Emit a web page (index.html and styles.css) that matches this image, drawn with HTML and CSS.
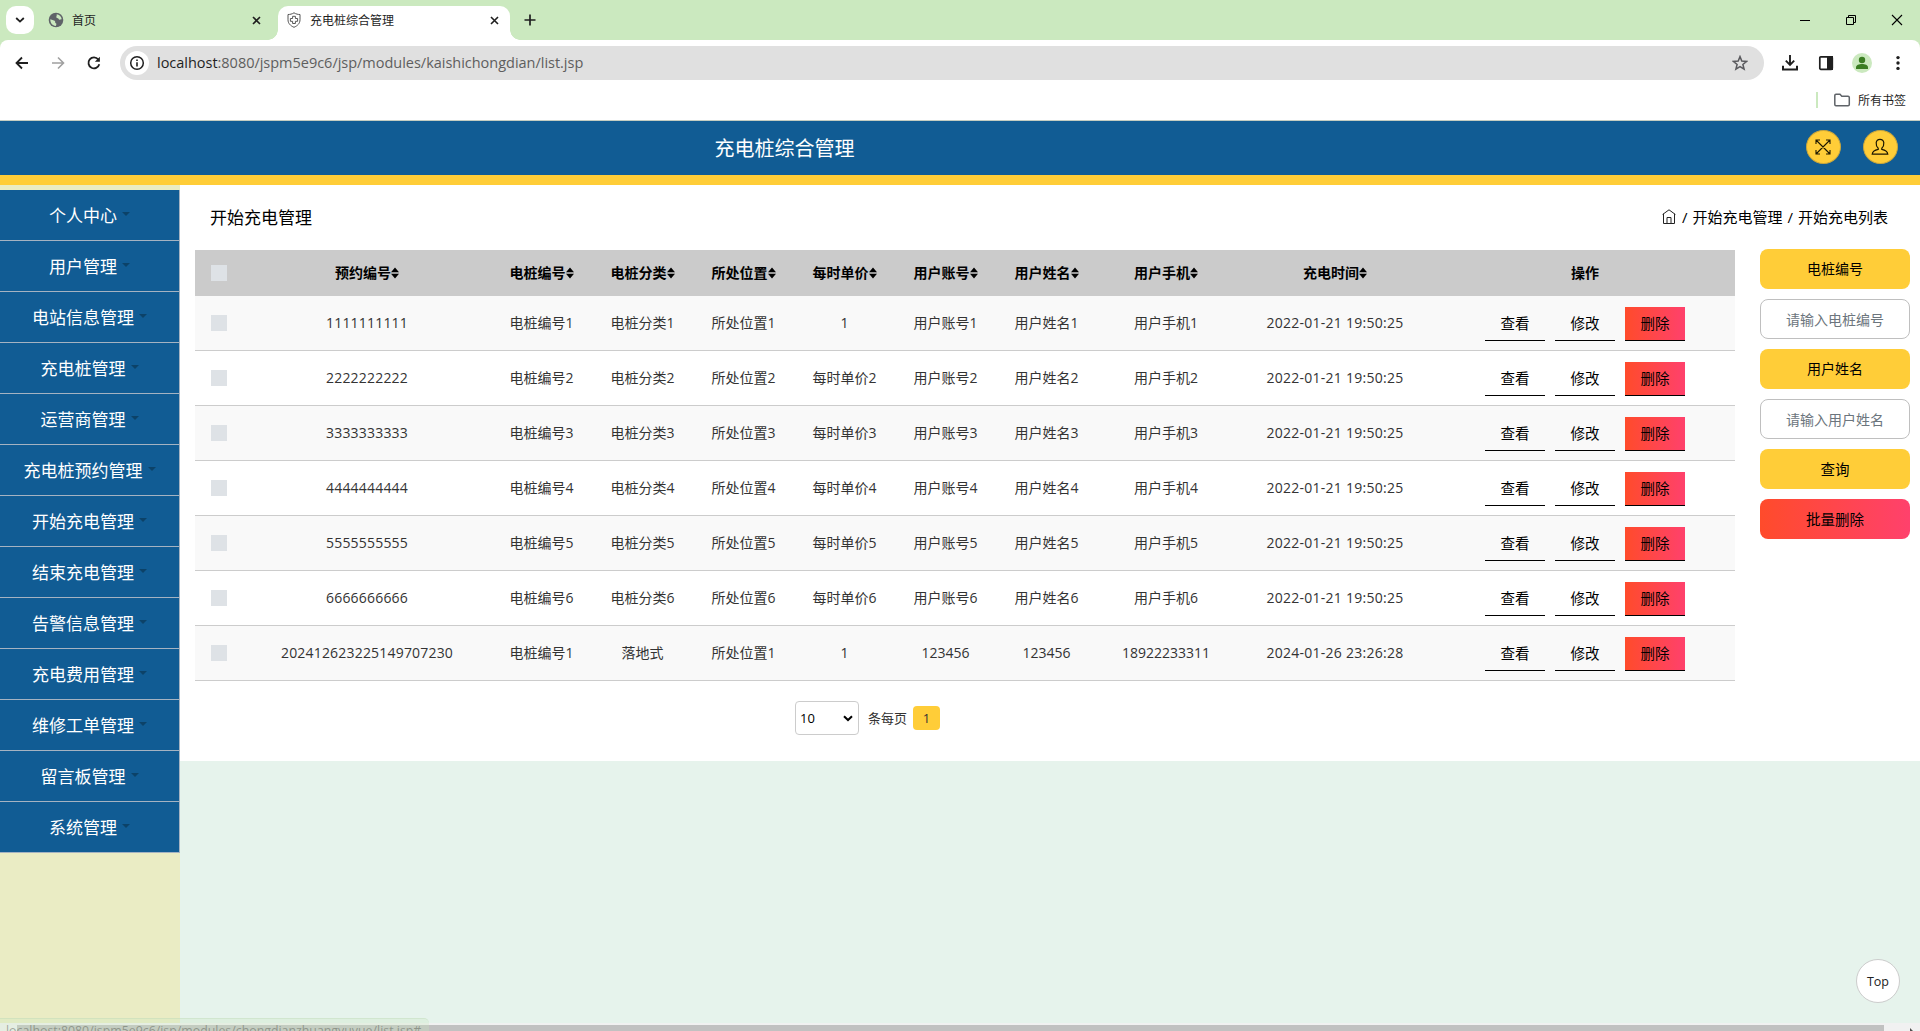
FILE: index.html
```
<!DOCTYPE html>
<html lang="zh">
<head>
<meta charset="utf-8">
<title>充电桩综合管理</title>
<link rel="stylesheet" href="styles.css">
</head>
<body>
<div class="browser">
  <div class="tabstrip">
    <div class="tabsearch"><svg width="10" height="8" viewBox="0 0 10 8"><path d="M1.200 2 5 5.600 8.800 2" fill="none" stroke="#1f1f1f" stroke-width="1.800"/></svg></div>
    <div class="tab">
      <svg width="16" height="16" viewBox="0 0 16 16"><circle cx="8" cy="8" r="7.300" fill="#5f6368"/><path d="M8.600 2.300c2.600.2 4.800 2.300 5.100 5-.9-.3-1.500.6-2.300.5-.8-.2-.6-1.500-1.600-1.600-1-.1-1.700-.8-1.400-1.700.2-.8.6-1.300.2-2.200zM2.300 7.200l3.700 1.300c.9.400 1.300 1 1.200 1.900 0 .9 1.200.6 1.200 1.700 0 .8-.4 1.200-.6 1.800C4.600 13.600 2.100 11 2.300 7.200z" fill="#cbe9bf"/></svg>
      <span class="tabname">首页</span>
      <svg class="x" width="9" height="9" viewBox="0 0 9 9"><path d="M1 1l7 7M8 1l-7 7" stroke="#1f1f1f" stroke-width="1.600"/></svg>
    </div>
    <div class="tab active">
      <svg width="16" height="16" viewBox="0 0 16 16"><path d="M8 .8c2 1.300 4 1.700 6 1.700v5.300c0 3.600-2.500 6-6 7.500-3.500-1.500-6-3.900-6-7.500V2.500c2 0 4-.4 6-1.700z" fill="none" stroke="#555" stroke-width="1"/><path d="M6.600 4.300h2.800v2.200h2.200v2.800H9.400v2.200H6.600V9.300H4.400V6.500h2.200z" fill="none" stroke="#555" stroke-width="1"/></svg>
      <span class="tabname">充电桩综合管理</span>
      <svg class="x" width="9" height="9" viewBox="0 0 9 9"><path d="M1 1l7 7M8 1l-7 7" stroke="#1f1f1f" stroke-width="1.600"/></svg>
    </div>
    <svg class="plus" width="12" height="12" viewBox="0 0 12 12"><path d="M6 .5v11M.5 6h11" stroke="#1f1f1f" stroke-width="1.700"/></svg>
    <div class="winctl">
      <svg width="12" height="12" viewBox="0 0 12 12"><path d="M1 6.500h10" stroke="#000"/></svg>
      <svg width="12" height="12" viewBox="0 0 12 12"><path d="M1.500 3.500h7v7h-7zM3.500 3.500v-2h7v7h-2" fill="none" stroke="#000"/></svg>
      <svg width="12" height="12" viewBox="0 0 12 12"><path d="M1 1l10 10M11 1L1 11" stroke="#000" stroke-width="1.100"/></svg>
    </div>
  </div>
  <div class="toolbar">
    <svg width="16" height="16" viewBox="0 0 16 16"><path d="M14 8H2.800M8 2.500L2.500 8 8 13.500" fill="none" stroke="#1f1f1f" stroke-width="1.800"/></svg>
    <svg width="16" height="16" viewBox="0 0 16 16"><path d="M2 8h11.200M8 2.500L13.500 8 8 13.500" fill="none" stroke="#a0a0a0" stroke-width="1.600"/></svg>
    <svg width="16" height="16" viewBox="0 0 16 16"><path d="M13.300 9.300A5.500 5.500 0 1 1 12.300 4.500" fill="none" stroke="#1f1f1f" stroke-width="1.800"/><path d="M13.900 1.700v5H8.900z" fill="#1f1f1f"/></svg>
    <div class="omnibox">
      <span class="info"><svg width="16" height="16" viewBox="0 0 16 16"><circle cx="8" cy="8" r="6.300" fill="none" stroke="#1f1f1f" stroke-width="1.500"/><path d="M8 7.200v4.200M8 4.500v1.600" stroke="#1f1f1f" stroke-width="1.600"/></svg></span>
      <span class="url"><b>localhost</b>:8080/jspm5e9c6/jsp/modules/kaishichongdian/list.jsp</span>
      <svg width="16" height="16" viewBox="0 0 16 16"><path d="M8 1.600l1.800 4.500 4.800.3-3.700 3.100 1.200 4.700L8 11.600l-4.100 2.600 1.200-4.700L1.400 6.400l4.800-.3z" fill="none" stroke="#5a5a5e" stroke-width="1.500"/></svg>
    </div>
    <div class="tools">
      <svg width="18" height="18" viewBox="0 0 18 18"><path d="M9 1v9.500M4.800 6.700L9 10.900l4.200-4.200" fill="none" stroke="#1f1f1f" stroke-width="1.900"/><path d="M2 11.800v3.700h14v-3.700" fill="none" stroke="#1f1f1f" stroke-width="2"/></svg>
      <svg width="18" height="18" viewBox="0 0 18 18"><rect x="2.800" y="2.800" width="12.500" height="12.500" rx="1" fill="none" stroke="#1f1f1f" stroke-width="1.700"/><path d="M10 2h6v14h-6z" fill="#1f1f1f"/></svg>
      <svg width="20" height="20" viewBox="0 0 20 20"><circle cx="10" cy="10" r="10" fill="#cbe9bf"/><circle cx="10" cy="7" r="3.200" fill="#3a7d22"/><path d="M4 16v-1.500c0-2.300 3-3.400 6-3.400s6 1.100 6 3.400V16z" fill="#3a7d22"/></svg>
      <svg width="16" height="16" viewBox="0 0 16 16"><g fill="#1f1f1f"><circle cx="8" cy="2.600" r="1.700"/><circle cx="8" cy="8" r="1.700"/><circle cx="8" cy="13.400" r="1.700"/></g></svg>
    </div>
  </div>
  <div class="bookmarks">
    <i></i>
    <svg width="18" height="14" viewBox="0 0 18 14"><path d="M1.800 11.500v-9c0-.8.400-1.200 1.200-1.200h4l1.800 1.900h6.300c.8 0 1.200.4 1.200 1.200v7.200c0 .8-.4 1.100-1.200 1.100H3c-.8 0-1.200-.4-1.200-1.200z" fill="none" stroke="#5f6368" stroke-width="1.500"/></svg>
    <span>所有书签</span>
  </div>
</div>
<header class="header">
  <h1>充电桩综合管理</h1>
  <div class="hbtns">
    <span class="round"><svg width="16" height="16" viewBox="0 0 16 16"><path d="M1 1l14 14M15 1L1 15M1 5V1h4M11 1h4v4M15 11v4h-4M5 15H1v-4" fill="none" stroke="#1c1600" stroke-width="1.100"/></svg></span>
    <span class="round"><svg width="18" height="18" viewBox="0 0 18 18"><path d="M7.200 10.200C5.600 8.800 5 6.800 5.200 4.600 5.500 2.500 7 1.300 9 1.300s3.500 1.200 3.800 3.300c.2 2.200-.4 4.200-2 5.600v1.200c3 .6 5.700 1.800 6 4.800H1.200c.3-3 3-4.200 6-4.800z" fill="none" stroke="#1c1600" stroke-width="1.200"/></svg></span>
  </div>
</header>
<div class="body">
  <nav class="sidebar" id="menu"></nav>
  <main class="main">
    <section class="panel">
      <div class="pagehead">
        <h2>开始充电管理</h2>
        <div class="crumbs"><svg width="14" height="15" viewBox="0 0 14 15"><path d="M.6 5.500L7 .8l6.400 4.700M1.500 4.800v9.700h11V4.800M5 14.500V8.500h4v6" fill="none" stroke="#222" stroke-width="1"/></svg><span>/</span><span>开始充电管理</span><span>/</span><span>开始充电列表</span></div>
      </div>
      <div class="content">
        <div class="list">
          <table>
            <colgroup><col class="c-check"><col class="c-id"><col class="c-n"><col class="c-n"><col class="c-n"><col class="c-n"><col class="c-n"><col class="c-n"><col class="c-phone"><col class="c-time"><col class="c-op"></colgroup>
            <thead id="thead"></thead>
            <tbody id="tbody"></tbody>
          </table>
          <div class="pager">
            <span class="select">10<svg width="10" height="7" viewBox="0 0 10 7"><path d="M1 1.200l4 3.800 4-3.800" fill="none" stroke="#000" stroke-width="2"/></svg></span>
            <span class="per">条每页</span>
            <span class="page">1</span>
          </div>
        </div>
        <aside class="filters">
          <div class="f yellow">电桩编号</div>
          <div class="f field">请输入电桩编号</div>
          <div class="f yellow">用户姓名</div>
          <div class="f field">请输入用户姓名</div>
          <div class="f yellow big">查询</div>
          <div class="f red big">批量删除</div>
        </aside>
      </div>
    </section>
  </main>
</div>
<div class="top">Top</div>
<div class="hscroll"><span class="left"></span><span class="thumb"></span><span class="right"></span></div>
<div class="status">localhost:8080/jspm5e9c6/jsp/modules/chongdianzhuangyuyue/list.jsp#</div>
<script src="app.js"></script>
</body>
</html>
```
FILE: styles.css
```
* { box-sizing: border-box; }
html, body { margin: 0; height: 1031px; overflow: hidden; }
body {
  display: flex; flex-direction: column; position: relative; width: 1920px;
  font-family: "Open Sans", "Noto Sans CJK SC", sans-serif;
  font-size: 14px; color: #333; background: #e6f3ec;
}
svg { display: block; flex: none; }
h1, h2 { margin: 0; font-weight: 400; }

.browser { height: 121px; flex: none; background: #fff; border-bottom: 1px solid #c5cdc2; color: #1f1f1f; font-size: 12px; }
.tabstrip { height: 48px; margin-bottom: -8px; padding: 6px 17px 8px 6px; display: flex; background: #cbe9bf; }
.tabsearch { width: 28px; height: 28px; border-radius: 10px; background: #fff; display: flex; align-items: center; justify-content: center; }
.tab { width: 232px; height: 34px; margin-left: 12px; padding: 0 17px 6px 2px; display: flex; align-items: center; gap: 8px; }
.tab .x { margin-left: auto; }
.tab.active { position: relative; margin-left: 0; padding: 0 11px 6px 8px; background: #fff; border-radius: 10px 10px 0 0; }
.tab.active::before, .tab.active::after { content: ""; position: absolute; bottom: 0; width: 10px; height: 10px; }
.tab.active::before { left: -10px; background: radial-gradient(circle at 0 0, #cbe9bf 9.500px, #fff 10px); }
.tab.active::after { right: -10px; background: radial-gradient(circle at 100% 0, #cbe9bf 9.500px, #fff 10px); }
.plus { margin: 8px 0 0 14px; }
.winctl { margin: 8px 0 0 auto; display: flex; gap: 34px; }
.toolbar { position: relative; height: 46px; padding: 6px 14px 6px; display: flex; align-items: center; background: #fff; border-radius: 8px 8px 0 0; }
.toolbar > svg { margin-right: 20px; }
.toolbar > svg:nth-child(3) { margin-right: 18px; }
.omnibox { width: 1644px; height: 34px; border-radius: 17px; background: #e0e0e0; display: flex; align-items: center; padding: 0 16px 0 5px; }
.info { width: 24px; height: 24px; border-radius: 50%; background: #fff; display: flex; align-items: center; justify-content: center; margin-right: 8px; }
.url { flex: 1; font-size: 14.500px; letter-spacing: -.02px; color: #5e5e5e; white-space: nowrap; padding-bottom: 1px; }
.url b { font-weight: 400; color: #1f1f1f; }
.tools { flex: 1; display: flex; align-items: center; justify-content: space-between; padding-left: 17px; }
.bookmarks { height: 30px; display: flex; align-items: center; justify-content: flex-end; padding-right: 14px; margin-top: -1px; }
.bookmarks i { width: 2px; height: 16px; background: #cbe9bf; margin-right: 15px; }
.bookmarks span { margin-left: 7px; }

.header { height: 64px; flex: none; background: #115c94; border-bottom: 10px solid #ffcd38; display: flex; }
.header h1 { width: 1569px; text-align: center; font-size: 20px; line-height: 56px; color: #fff; }
.hbtns { margin-left: auto; padding: 9px 22px 0 0; display: flex; gap: 22px; }
.round { width: 35px; height: 34px; border-radius: 50%; background: #ffcd38; border: 1px solid #c9a63c; display: flex; align-items: center; justify-content: center; padding-right: 1px; }

.body { flex: 1; display: flex; min-height: 0; }
.sidebar { width: 180px; padding-top: 5px; background: #eaecc4; }
.item { height: 51px; border: solid #a5b3c2; border-width: 0 1px 1px 0; background: #115c94; color: #fff; font-size: 17px; display: flex; align-items: center; justify-content: center; padding-bottom: 2px; }
.item::after { content: ""; margin-left: 5px; border: 4px solid transparent; border-top-color: #0c4268; border-bottom: 0; }
.main { flex: 1; }
.panel { height: 576px; background: #fff; }
.pagehead { height: 65px; padding: 0 32px 2px 30px; display: flex; align-items: center; justify-content: space-between; color: #000; }
.pagehead h2 { font-size: 17px; }
.crumbs { display: flex; align-items: center; gap: 5px; font-size: 15px; }
.crumbs svg { margin: -1px 1px 0 0; }
.content { display: flex; padding-left: 15px; }
.list { width: 1540px; }
table { width: 1540px; table-layout: fixed; border-collapse: separate; border-spacing: 0; }
.c-check { width: 48px; } .c-id { width: 248px; } .c-n { width: 101px; }
.c-phone { width: 138px; } .c-time { width: 200px; } .c-op { width: 300px; }
th { height: 46px; padding: 0; background: #cbcbcb; color: #000; font-weight: 700; font-size: 14px; line-height: 20px; }
td { height: 55px; padding: 0; text-align: center; border-bottom: 1px solid #ccc; line-height: 20px; }
td:nth-child(2) { letter-spacing: .19px; }
td:nth-child(10) { letter-spacing: .26px; }
tr:nth-child(odd) td { background: #f9f9f9; }
.hd { display: flex; align-items: center; justify-content: center; }
.box { display: block; width: 16px; height: 16px; margin: 0 auto; background: #dee2e6; }
.ops { display: flex; justify-content: center; gap: 10px; padding-top: 1px; }
.ops span { width: 60px; height: 34px; line-height: 34px; border-bottom: 1px solid #000; color: #000; font-size: 14.500px; }
.ops .del, .red { background: linear-gradient(90deg, #ff4b2b, #ff416c); }
.pager { display: flex; align-items: center; justify-content: center; height: 34px; margin-top: 20px; padding-right: 195px; font-size: 13px; }
.select { width: 64px; height: 34px; border: 1px solid #ccc; border-radius: 4px; padding: 0 5px 0 4px; display: flex; align-items: center; justify-content: space-between; color: #000; }
.per { margin: 0 6px 1px 9px; }
.page { width: 27px; height: 24px; line-height: 24px; border-radius: 4px; background: #ffcd38; text-align: center; }
.filters { width: 150px; margin: -1px 0 0 25px; display: flex; flex-direction: column; gap: 10px; }
.f { height: 40px; line-height: 40px; border-radius: 8px; text-align: center; color: #000; }
.yellow { background: #ffcd38; }
.field { border: 1px solid #bfbfbf; background: #fff; color: #6c757d; }
.big { font-size: 14.500px; line-height: 41px; }

.top { position: absolute; left: 1856px; top: 959px; width: 44px; height: 44px; border: 1px solid #ccc; border-radius: 50%; background: #fff; color: #222; font-size: 12.500px; line-height: 43px; text-align: center; }
.hscroll { position: absolute; left: 0; right: 0; bottom: 0; height: 8px; background: #f1f1f1; display: flex; align-items: flex-end; overflow: hidden; }
.hscroll .left { width: 17px; }
.hscroll .thumb { width: 1867px; height: 6px; background: #c1c1c1; }
.hscroll .right { margin-left: 26px; width: 0; height: 0; border-left: 3px solid #505050; border-top: 3px solid transparent; }
.status { position: absolute; left: 0; top: 1018px; width: 429px; height: 13px; padding: 3px 0 0 6px; overflow: hidden; background: rgba(203,233,191,.3); border-top: 1px solid rgba(190,215,185,.4); border-top-right-radius: 5px; color: rgba(90,95,85,.5); font-size: 12.350px; line-height: 17px; white-space: nowrap; }
```
FILE: app.js
```
const menu = ['个人中心', '用户管理', '电站信息管理', '充电桩管理', '运营商管理', '充电桩预约管理', '开始充电管理', '结束充电管理', '告警信息管理', '充电费用管理', '维修工单管理', '留言板管理', '系统管理'];
document.getElementById('menu').innerHTML = menu.map(m => `<div class="item">${m}</div>`).join('');

const sort = '<svg width="8" height="12" viewBox="0 0 8 12"><path d="M0 5.200L4 .6l4 4.600zM0 6.800h8L4 11.400z" fill="#000"/></svg>';
const heads = ['预约编号', '电桩编号', '电桩分类', '所处位置', '每时单价', '用户账号', '用户姓名', '用户手机', '充电时间'];
document.getElementById('thead').innerHTML = '<tr><th><i class="box"></i></th>' +
  heads.map(h => `<th><div class="hd">${h}${sort}</div></th>`).join('') + '<th>操作</th></tr>';

const rows = [];
for (let i = 1; i <= 6; i++) {
  rows.push([String(i).repeat(10), '电桩编号' + i, '电桩分类' + i, '所处位置' + i, i === 1 ? '1' : '每时单价' + i, '用户账号' + i, '用户姓名' + i, '用户手机' + i, '2022-01-21 19:50:25']);
}
rows.push(['202412623225149707230', '电桩编号1', '落地式', '所处位置1', '1', '123456', '123456', '18922233311', '2024-01-26 23:26:28']);
document.getElementById('tbody').innerHTML = rows.map(r => '<tr><td><i class="box"></i></td>' +
  r.map(c => `<td>${c}</td>`).join('') +
  '<td><div class="ops"><span>查看</span><span>修改</span><span class="del">删除</span></div></td></tr>').join('');
```
